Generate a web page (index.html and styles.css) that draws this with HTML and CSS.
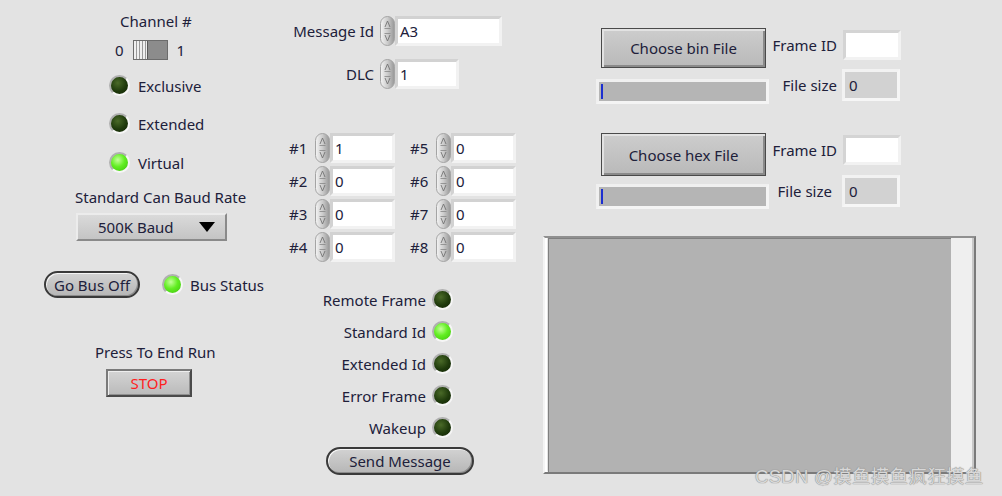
FILE: index.html
```html
<!DOCTYPE html>
<html>
  <head>
    <title>CAN Panel</title>
    <link rel="stylesheet" href="styles.css">
  </head>
  <body>
    <svg class="defs" width="0" height="0">
      <defs>
        <linearGradient id="spin-fill" x1="0" x2="1" y1="0" y2="0">
          <stop offset="0" stop-color="#f4f4f4"/>
          <stop offset="0.5" stop-color="#cccccc"/>
          <stop offset="1" stop-color="#969696"/>
        </linearGradient>
        <symbol id="spin" viewBox="0 0 15 30">
          <rect x="0.5" y="0.5" width="14" height="29" rx="7" fill="url(#spin-fill)" stroke="#a4a4a4"/>
          <path d="M5 11 L7.5 5 L10 11" fill="none" stroke="#747474" stroke-width="0.9"/>
          <path d="M4.5 12.5 H10.5" stroke="#868686" stroke-width="0.8"/>
          <path d="M4.5 17.5 H10.5" stroke="#868686" stroke-width="0.8"/>
          <path d="M5 19 L7.5 25 L10 19" fill="none" stroke="#747474" stroke-width="0.9"/>
        </symbol>
      </defs>
    </svg>

    <div class="panel">
      <!-- left column -->
      <div class="col-left">
        <p class="channel-label">Channel #</p>
        <div class="toggle-row">
          <span>0</span>
          <div class="toggle"><div class="toggle-knob"></div></div>
          <span>1</span>
        </div>

        <div class="led-row first">
          <div class="led"></div>
          <span>Exclusive</span>
        </div>
        <div class="led-row">
          <div class="led"></div>
          <span>Extended</span>
        </div>
        <div class="led-row third">
          <div class="led on"></div>
          <span>Virtual</span>
        </div>

        <p class="baud-label">Standard Can Baud Rate</p>
        <div class="dropdown">
          <span>500K Baud</span>
          <span class="dropdown-arrow"></span>
        </div>

        <div class="bus-row">
          <button class="pill-button bus-off">Go Bus Off</button>
          <div class="led on"></div>
          <span>Bus Status</span>
        </div>

        <p class="end-label">Press To End Run</p>
        <button class="stop-button">STOP</button>
      </div>

      <!-- middle column -->
      <div class="col-mid">
        <div class="field-row msg-row">
          <span class="field-label">Message Id</span>
          <svg class="spin"><use href="#spin"/></svg>
          <div class="num-box msg-box">A3</div>
        </div>
        <div class="field-row dlc-row">
          <span class="field-label">DLC</span>
          <svg class="spin"><use href="#spin"/></svg>
          <div class="num-box dlc-box">1</div>
        </div>

        <div class="data-grid">
          <div class="data-cell"><span class="data-label">#1</span><svg class="spin"><use href="#spin"/></svg><div class="num-box">1</div></div>
          <div class="data-cell"><span class="data-label">#5</span><svg class="spin"><use href="#spin"/></svg><div class="num-box">0</div></div>
          <div class="data-cell"><span class="data-label">#2</span><svg class="spin"><use href="#spin"/></svg><div class="num-box">0</div></div>
          <div class="data-cell"><span class="data-label">#6</span><svg class="spin"><use href="#spin"/></svg><div class="num-box">0</div></div>
          <div class="data-cell"><span class="data-label">#3</span><svg class="spin"><use href="#spin"/></svg><div class="num-box">0</div></div>
          <div class="data-cell"><span class="data-label">#7</span><svg class="spin"><use href="#spin"/></svg><div class="num-box">0</div></div>
          <div class="data-cell"><span class="data-label">#4</span><svg class="spin"><use href="#spin"/></svg><div class="num-box">0</div></div>
          <div class="data-cell"><span class="data-label">#8</span><svg class="spin"><use href="#spin"/></svg><div class="num-box">0</div></div>
        </div>

        <div class="flag-list">
          <div class="flag-row"><span class="flag-label">Remote Frame</span><div class="led"></div></div>
          <div class="flag-row"><span class="flag-label">Standard Id</span><div class="led on"></div></div>
          <div class="flag-row"><span class="flag-label">Extended Id</span><div class="led"></div></div>
          <div class="flag-row"><span class="flag-label">Error Frame</span><div class="led"></div></div>
          <div class="flag-row"><span class="flag-label">Wakeup</span><div class="led"></div></div>
        </div>

        <button class="pill-button send-button">Send Message</button>
      </div>

      <!-- right column -->
      <div class="col-right">
        <div class="file-block bin-block">
          <div class="file-left">
            <button class="file-button">Choose bin File</button>
            <div class="progress"><div class="progress-fill"></div></div>
          </div>
          <div class="file-right">
            <div class="info-row">
              <span class="info-label">Frame ID</span>
              <div class="id-box"></div>
            </div>
            <div class="info-row size-row">
              <span class="info-label">File size</span>
              <div class="size-box">0</div>
            </div>
          </div>
        </div>

        <div class="file-block hex-block">
          <div class="file-left">
            <button class="file-button">Choose hex File</button>
            <div class="progress"><div class="progress-fill"></div></div>
          </div>
          <div class="file-right">
            <div class="info-row">
              <span class="info-label">Frame ID</span>
              <div class="id-box"></div>
            </div>
            <div class="info-row size-row">
              <span class="info-label shift">File size</span>
              <div class="size-box">0</div>
            </div>
          </div>
        </div>

        <div class="log-box">
          <div class="log-area"></div>
          <div class="log-scroll"></div>
        </div>
      </div>
    </div>

    <p class="watermark">CSDN @摸鱼摸鱼疯狂摸鱼</p>
  </body>
</html>
```

FILE: styles.css
```css
body {
  margin: 0;
  width: 1002px;
  height: 496px;
  overflow: hidden;
  background-color: #e3e3e3;
  color: #20203a;
  font-family: "Noto Sans", "Open Sans", sans-serif;
  font-size: 15px;
  position: relative;
}

p {
  margin: 0;
}

.defs {
  position: absolute;
}

.panel {
  display: flex;
  align-items: flex-start;
}

/* LEDs */
.led {
  width: 17px;
  height: 17px;
  border-radius: 50%;
  border: 2px solid;
  border-color: #b0b0b0 #f6f6f6 #f6f6f6 #b0b0b0;
  background: radial-gradient(circle at 40% 35%, #4a6a28, #1f3a0c 55%, #112204);
  flex-shrink: 0;
}

.led.on {
  background: radial-gradient(circle at 40% 35%, #c4ff9a, #62ee22 45%, #3cc00c);
}

/* left column */
.col-left {
  width: 280px;
  flex-shrink: 0;
}

.channel-label {
  margin: 12px 0 0 120px;
  line-height: 18px;
}

.toggle-row {
  display: flex;
  align-items: center;
  gap: 9px;
  margin: 10px 0 0 115px;
  height: 20px;
}

.toggle {
  width: 33px;
  height: 18px;
  border: 1px solid #6c6c6c;
  background: #8c8c8c;
  display: flex;
}

.toggle-knob {
  width: 13px;
  height: 100%;
  background: repeating-linear-gradient(90deg, #f0f0f0 0 2px, #9a9a9a 2px 3px);
  border-right: 1px solid #5a5a5a;
}

.led-row {
  display: flex;
  align-items: center;
  gap: 8px;
  margin: 17px 0 0 109px;
  height: 21px;
}

.led-row.first {
  margin-top: 15px;
}

.led-row.third {
  margin-top: 18px;
}

.baud-label {
  margin: 15px 0 0 75px;
  line-height: 18px;
}

.dropdown {
  margin: 7px 0 0 76px;
  height: 24px;
  border: 2px solid;
  border-color: #ececec #8a8a8a #8a8a8a #ececec;
  background: linear-gradient(#dadada, #c4c4c4);
  display: flex;
  align-items: center;
  justify-content: space-between;
  padding: 0 10px 0 20px;
  box-sizing: content-box;
  width: 117px;
}

.dropdown-arrow {
  width: 0;
  height: 0;
  border-left: 8px solid transparent;
  border-right: 8px solid transparent;
  border-top: 10px solid #000;
}

.bus-row {
  display: flex;
  align-items: center;
  margin: 30px 0 0 44px;
  height: 27px;
}

.bus-row .led {
  margin: 0 7px 0 22px;
}

.pill-button {
  font-family: "Noto Sans", "Open Sans", sans-serif;
  font-size: 15px;
  color: #20203a;
  border: 2px solid #3a3a3a;
  border-radius: 14px;
  background: linear-gradient(#d2d2d2, #b6b6b6);
  box-shadow: inset 1px 1px 0 #f4f4f4, inset -1px -1px 0 #8c8c8c;
  padding: 0;
  line-height: 20px;
}

.bus-off {
  width: 96px;
  height: 27px;
}

.end-label {
  margin: 45px 0 0 95px;
  line-height: 18px;
}

.stop-button {
  display: block;
  margin: 8px 0 0 106px;
  width: 86px;
  height: 28px;
  font-family: "Noto Sans", "Open Sans", sans-serif;
  font-size: 15px;
  color: #ff1e1e;
  border: 2px solid;
  border-color: #7a7a7a #4a4a4a #4a4a4a #7a7a7a;
  background: linear-gradient(#d4d4d4, #bababa);
  box-shadow: inset 1px 1px 0 #eeeeee, inset -1px -1px 0 #909090;
  padding: 0;
}

/* middle column */
.col-mid {
  width: 260px;
  flex-shrink: 0;
}

.field-row {
  display: flex;
  align-items: center;
}

.msg-row {
  margin-top: 16px;
}

.dlc-row {
  margin-top: 13px;
}

.field-label {
  width: 94px;
  text-align: right;
  margin-right: 6px;
}

.spin {
  width: 15px;
  height: 30px;
  flex-shrink: 0;
}

.num-box {
  height: 24px;
  border: 3px solid;
  border-color: #d2d2d2 #f2f2f2 #f2f2f2 #d2d2d2;
  background: #fff;
  padding-left: 2px;
  line-height: 24px;
  width: 57px;
}

.msg-box {
  width: 99px;
}

.dlc-box {
  width: 56px;
}

.data-grid {
  display: grid;
  grid-template-columns: 106px 106px;
  column-gap: 15px;
  row-gap: 3px;
  margin: 44px 0 0 9px;
}

.data-cell {
  display: flex;
  align-items: center;
}

.data-label {
  width: 20px;
  margin-right: 6px;
}

.flag-list {
  display: flex;
  flex-direction: column;
  gap: 11px;
  margin-top: 27px;
}

.flag-row {
  display: flex;
  align-items: center;
  height: 21px;
}

.flag-label {
  width: 146px;
  text-align: right;
  margin-right: 6px;
}

.send-button {
  display: block;
  margin: 9px 0 0 46px;
  width: 148px;
  height: 28px;
}

/* right column */
.col-right {
  flex: 1;
}

.file-block {
  display: flex;
  align-items: flex-start;
  margin-left: 56px;
}

.bin-block {
  margin-top: 28px;
}

.hex-block {
  margin-top: 29px;
}

.file-left {
  width: 173px;
}

.file-button {
  display: block;
  margin-left: 5px;
  width: 165px;
  height: 40px;
  font-family: "Noto Sans", "Open Sans", sans-serif;
  font-size: 15px;
  color: #20203a;
  border: 1px solid #4a4a4a;
  background: linear-gradient(#cdcdcd, #b9b9b9);
  box-shadow: inset 2px 2px 0 #e2e2e2, inset -2px -2px 0 #8a8a8a;
  padding: 0;
}

.hex-block .file-button {
  height: 43px;
}

.progress {
  margin-top: 11px;
  height: 15px;
  border: 3px solid;
  border-color: #f0f0f0 #f4f4f4 #f4f4f4 #f0f0f0;
  background: #b5b5b5;
  padding: 2px 0 2px 2px;
  box-sizing: content-box;
  width: 165px;
}

.hex-block .progress {
  margin-top: 8px;
}

.progress-fill {
  width: 2px;
  height: 100%;
  background: #1c2fd0;
}

.file-right {
  margin: 2px 0 0 2px;
}

.info-row {
  display: flex;
  align-items: center;
}

.size-row {
  margin-top: 9px;
}

.hex-block .size-row {
  margin-top: 10px;
}

.info-label {
  width: 66px;
  text-align: right;
  margin-right: 6px;
}

.info-label.shift {
  margin-right: 11px;
  width: 61px;
}

.id-box {
  width: 52px;
  height: 24px;
  border: 3px solid;
  border-color: #d4d4d4 #f2f2f2 #f2f2f2 #d4d4d4;
  background: #fff;
}

.size-box {
  width: 48px;
  height: 26px;
  border: 3px solid;
  border-color: #f2f2f2 #f6f6f6 #f6f6f6 #f2f2f2;
  background: #d2d2d2;
  padding-left: 4px;
  line-height: 26px;
  margin-left: -1px;
}

.log-box {
  margin: 27px 0 0 3px;
  width: 426px;
  height: 234px;
  border: 2px solid;
  border-color: #909090 #7a7a7a #7a7a7a #f4f4f4;
  display: flex;
  box-shadow: inset 2px 0 0 #ffffff, inset 0 -1px 0 #f0f0f0;
  padding-left: 3px;
}

.log-area {
  flex: 1;
  background: #b2b2b2;
  border-top: 1px solid #808080;
  border-left: 1px solid #808080;
}

.log-scroll {
  width: 21px;
  background: #efefef;
  border-right: 2px solid #c8c8c8;
}

.watermark {
  position: absolute;
  left: 755px;
  top: 462px;
  font-family: "Liberation Sans", "Noto Sans CJK SC", sans-serif;
  font-size: 18.5px;
  color: #d8d8d8;
  text-shadow: 0 0 1px #8a8a8a, 0 0 1px #8a8a8a;
  letter-spacing: 0.3px;
}
```
